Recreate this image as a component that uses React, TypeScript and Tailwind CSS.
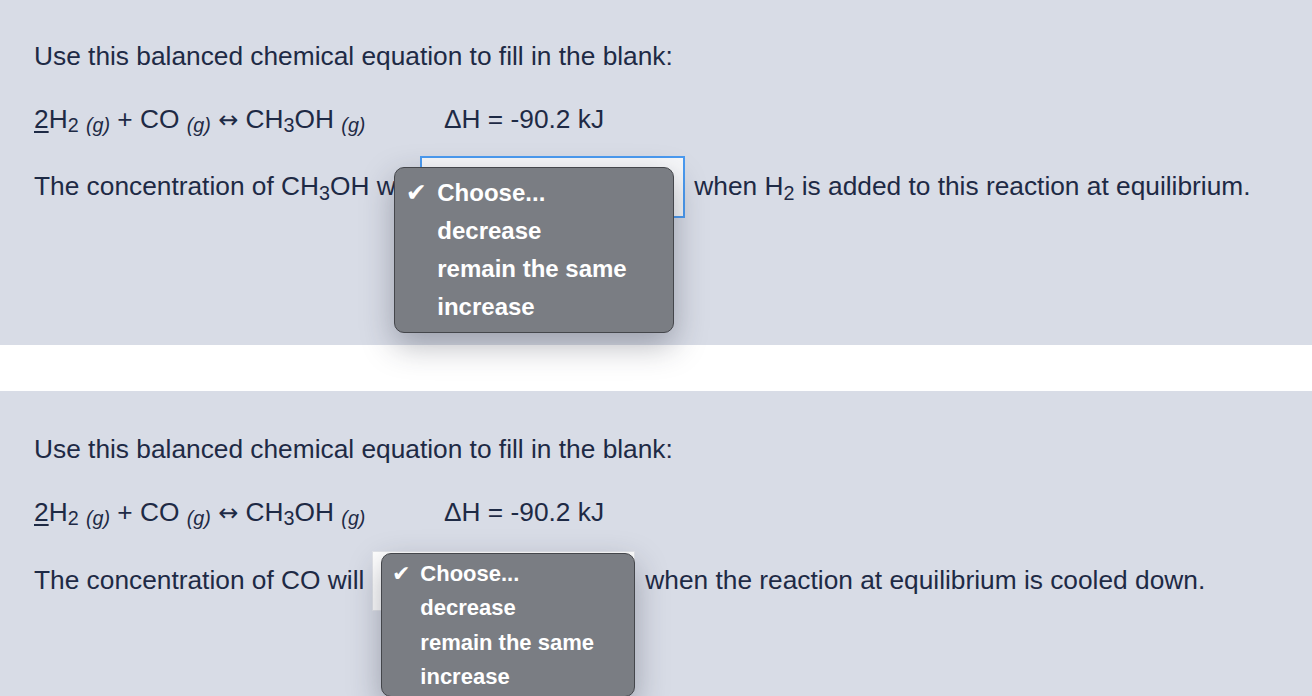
import React from 'react';

const font = { fontFamily: '"Liberation Sans", Arial, sans-serif' };

const options = ['Choose...', 'decrease', 'remain the same', 'increase'];

interface MenuProps {
  big?: boolean;
}

// Native-looking select popup drawn over the page
const Menu = ({ big }: MenuProps) => (
  <div
    className={`absolute z-10 rounded-[10px] border border-[#44464b] bg-[#7a7d83] text-white shadow-[0_12px_32px_rgba(40,44,60,0.35)] ${
      big ? 'left-[-28px] top-[9px] w-[280px] py-[6px]' : 'left-[8px] top-[1px] w-[254px] py-[2px]'
    }`}
  >
    {options.map((o, i) => (
      <div
        key={o}
        className={`flex items-center font-bold ${big ? 'h-[38px] text-[24px]' : 'h-[34.5px] text-[22px]'}`}
      >
        <span
          className={`flex justify-center ${big ? 'w-[42px] text-[25px]' : 'w-[38px] text-[22px]'}`}
          style={{ fontFamily: '"DejaVu Sans", sans-serif' }}
        >
          {i === 0 ? '✔' : ''}
        </span>
        <span>{o}</span>
      </div>
    ))}
  </div>
);

const Equation = () => (
  <p className="flex h-[30px] items-center leading-[30px]">
    <span className="inline-block w-[410px] whitespace-nowrap">
      <span className="underline underline-offset-[3px]">2</span>H<sub>2</sub> <sub><i>(g)</i></sub> + CO{' '}
      <sub><i>(g)</i></sub> <span style={{ fontFamily: '"DejaVu Sans", sans-serif' }} className="text-[24px]">↔</span> CH
      <sub>3</sub>OH <sub><i>(g)</i></sub>
    </span>
    <span>ΔH = -90.2 kJ</span>
  </p>
);

interface QuestionProps {
  before: React.ReactNode;
  after: React.ReactNode;
  top?: boolean;
}

const Question = ({ before, after, top }: QuestionProps) => (
  <div
    className={`bg-[#d8dce6] px-[34px] text-[26.3px] text-[#1e2a45] ${top ? 'h-[345px] pt-[41px]' : 'h-[305px] pt-[43px]'}`}
  >
    <p className="h-[30px] leading-[30px]">Use this balanced chemical equation to fill in the blank:</p>
    <div className="mt-[33px]">
      <Equation />
    </div>
    <div className={`flex h-[62px] items-center whitespace-nowrap ${top ? 'mt-[22px]' : 'mt-[23px]'}`}>
      <span>{before}</span>
      {top ? (
        <div className="relative ml-[7px] mr-[9px] h-[62px] w-[265px] border-2 border-[#4a9af0] bg-[#f6f7f9]">
          <Menu big />
        </div>
      ) : (
        <div className="relative ml-[8px] mr-[10px] h-[60px] w-[263px] border border-[#e3e5ea] bg-white">
          <Menu />
        </div>
      )}
      <span>{after}</span>
    </div>
  </div>
);

export default function App() {
  return (
    <div className="h-[696px] overflow-hidden bg-white" style={font}>
      <Question
        top
        before={
          <>
            The concentration of CH<sub>3</sub>OH will
          </>
        }
        after={
          <>
            when H<sub>2</sub> is added to this reaction at equilibrium.
          </>
        }
      />
      <div className="h-[46px] bg-white" />
      <Question before="The concentration of CO will" after="when the reaction at equilibrium is cooled down." />
    </div>
  );
}
